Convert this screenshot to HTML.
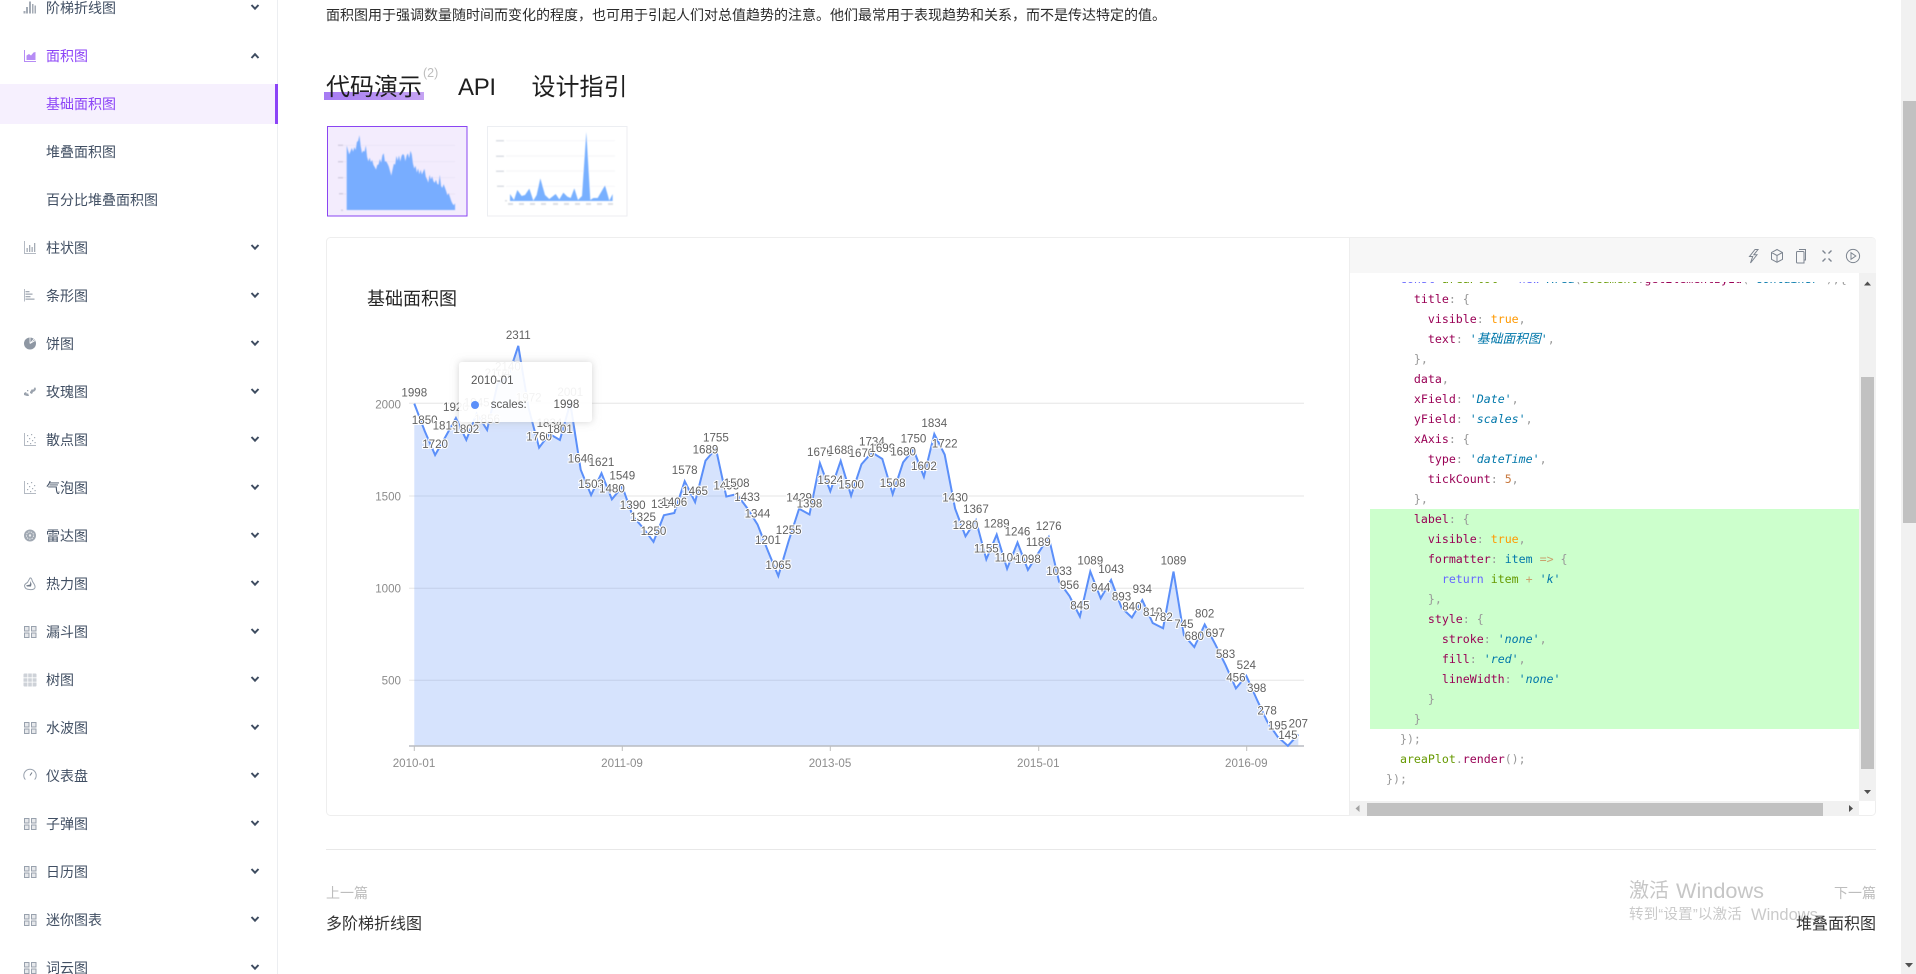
<!DOCTYPE html>
<html lang="zh-CN">
<head>
<meta charset="utf-8">
<title>基础面积图</title>
<style>
html,body{margin:0;padding:0;background:#fff;width:1916px;height:974px;overflow:hidden}
body{position:relative;font-family:"Liberation Sans","Noto Sans CJK SC",sans-serif}
.a{position:absolute;white-space:nowrap}
.r{position:absolute;left:46px;height:40px;line-height:40px;font-size:14px;color:#414f63;white-space:nowrap}
.code{position:absolute;left:1350px;top:282px;width:509px;height:519px;overflow:hidden;background:#fff}
.hl{position:absolute;left:20px;top:227px;width:489px;height:220px;background:#ccffcc}
pre{position:absolute;left:36px;top:-13px;margin:0;font:11.6px/20px "DejaVu Sans Mono","Liberation Mono",monospace;color:#999}
pre b{font-weight:normal;color:#990055}
pre i{font-style:italic;color:#0077aa}
pre i span{font-family:"Liberation Sans","Noto Sans CJK SC",sans-serif;font-size:12.8px}
pre u{text-decoration:none;color:#ff9900}
pre s{text-decoration:none;color:#c8793f}
pre em{font-style:normal;color:#6666ff}
pre q{quotes:none;color:#669900}
pre tt{font:inherit;color:#c9a26d}
pre kbd{font:inherit;color:#0077aa}
svg{position:absolute;left:0;top:0}
svg text{font-family:"Liberation Sans",sans-serif}
.lb text{font-size:11.6px;text-anchor:middle;fill:#616161;stroke:#fff;stroke-width:2px;paint-order:stroke}
.ax text{font-size:11.6px;fill:#8c8c8c}
</style>
</head>
<body>

<!-- sidebar -->
<div class="a" style="left:277px;top:0;width:1px;height:974px;background:#eceef1"></div>
<div class="a" style="left:0;top:84px;width:275px;height:40px;background:#f6f0fe"></div>
<div class="a" style="left:275px;top:84px;width:3px;height:40px;background:#8c44f7"></div>

<div class="r" style="top:-12px">阶梯折线图</div>
<div class="r" style="top:36px;color:#8c44f7">面积图</div>
<div class="r" style="top:84px;color:#8c44f7">基础面积图</div>
<div class="r" style="top:132px">堆叠面积图</div>
<div class="r" style="top:180px">百分比堆叠面积图</div>
<div class="r" style="top:228px">柱状图</div>
<div class="r" style="top:276px">条形图</div>
<div class="r" style="top:324px">饼图</div>
<div class="r" style="top:372px">玫瑰图</div>
<div class="r" style="top:420px">散点图</div>
<div class="r" style="top:468px">气泡图</div>
<div class="r" style="top:516px">雷达图</div>
<div class="r" style="top:564px">热力图</div>
<div class="r" style="top:612px">漏斗图</div>
<div class="r" style="top:660px">树图</div>
<div class="r" style="top:708px">水波图</div>
<div class="r" style="top:756px">仪表盘</div>
<div class="r" style="top:804px">子弹图</div>
<div class="r" style="top:852px">日历图</div>
<div class="r" style="top:900px">迷你图表</div>
<div class="r" style="top:948px">词云图</div>

<svg width="278" height="974" viewBox="0 0 278 974" style="width:278px;height:974px">
<defs>
<path id="dn" d="M251.5-3L255 .7l3.5-3.7" fill="none" stroke="#3e4c60" stroke-width="2"/>
<g id="grid" fill="#e6e8eb" stroke="#98a1ad" stroke-width="1">
<rect x="24.5" y="-5.5" width="4.5" height="4.5"/><rect x="31.5" y="-5.5" width="4.5" height="4.5"/>
<rect x="24.5" y="1" width="4.5" height="4.5"/><rect x="31.5" y="1" width="4.5" height="4.5"/>
</g>
<g id="scat"><path d="M24.5-7V5.5H36" fill="none" stroke="#b4bac3"/>
<g fill="#a4abb5"><rect x="27" y="-5" width="1.2" height="1.2"/><rect x="31" y="-6" width="1.2" height="1.2"/><rect x="34" y="-3" width="1.2" height="1.2"/><rect x="29" y="-2" width="1.2" height="1.2"/><rect x="32" y="0" width="1.2" height="1.2"/><rect x="27" y="1" width="1.2" height="1.2"/><rect x="34.5" y="2" width="1.2" height="1.2"/><rect x="30" y="3" width="1.2" height="1.2"/></g></g>
</defs>
<!-- chevrons -->
<use href="#dn" y="8"/>
<path d="M251.5 58L255 54.2l3.5 3.8" fill="none" stroke="#3e4c60" stroke-width="2"/>
<use href="#dn" y="248"/><use href="#dn" y="296"/><use href="#dn" y="344"/><use href="#dn" y="392"/>
<use href="#dn" y="440"/><use href="#dn" y="488"/><use href="#dn" y="536"/><use href="#dn" y="584"/>
<use href="#dn" y="632"/><use href="#dn" y="680"/><use href="#dn" y="728"/><use href="#dn" y="776"/>
<use href="#dn" y="824"/><use href="#dn" y="872"/><use href="#dn" y="920"/><use href="#dn" y="968"/>
<!-- step -->
<g transform="translate(0,8)" fill="#a4abb5"><rect x="23.5" y="3" width="2" height="2.5"/><rect x="26" y="-1" width="2" height="6.5"/><rect x="29" y="-6.5" width="2" height="12"/><rect x="32" y="-4" width="1.5" height="9.5"/><path d="M34.5-2.5h1.5v8h-1.5z"/></g>
<!-- area -->
<g transform="translate(0,56)"><path d="M24.5-6V5.5H36" fill="none" stroke="#b68cf5"/><path d="M26.5 4V-.5L29-2l2 1.5L33.5-3.5 35.5-4V4z" fill="#b68cf5"/></g>
<!-- bar -->
<g transform="translate(0,248)"><path d="M24.5-7V5.5H36" fill="none" stroke="#b4bac3"/><g fill="#a4abb5"><rect x="26.5" y="0" width="1.3" height="4"/><rect x="29" y="-3" width="1.3" height="7"/><rect x="31.5" y="-1" width="1.3" height="5"/><rect x="34" y="-5" width="1.3" height="9"/></g></g>
<!-- hbar -->
<g transform="translate(0,296)"><path d="M24.5-7V5.5" fill="none" stroke="#b4bac3"/><g fill="#a4abb5"><rect x="25.5" y="-5" width="4" height="1.3"/><rect x="25.5" y="-2.5" width="7" height="1.3"/><rect x="25.5" y="0" width="5" height="1.3"/><rect x="25.5" y="2.5" width="9" height="1.3"/></g></g>
<!-- pie -->
<g transform="translate(0,344)"><circle cx="30" cy="-.5" r="6" fill="#8e97a3"/><path d="M30-.5V-6.5M30-.5L35-3.5M30-.5L34-5" stroke="#fff" stroke-width=".8" fill="none"/></g>
<!-- rose -->
<g transform="translate(0,392)" fill="#9aa2ad"><path d="M24 1l2-1 1 2 1-1 1 3-2 0-3-1zM30 0l2-3 1 1 2-3 1 2-1 2-2 1-1 2-2-1zM27-2l1.3 0 0 1.3-1.3 0z"/></g>
<!-- scatter, bubble -->
<use href="#scat" y="440"/><use href="#scat" y="488"/>
<!-- radar -->
<g transform="translate(0,536)"><circle cx="30" cy="-.5" r="6" fill="#a0a8b2"/><circle cx="30" cy="-.5" r="3.6" fill="none" stroke="#e6e8eb" stroke-width="1" stroke-dasharray="1.5 1"/><circle cx="30" cy="-.5" r="1.2" fill="#eceef0"/></g>
<!-- heat -->
<g transform="translate(0,584)"><path d="M24.5 2c0-2 2-3 3-3.5L30-6c1.5-.5 2 2 2.5 3.5 1 2 3 3.5 2.5 6-.5 2-3 2.3-5.5 2-2.5 0-4.5-1-5-3.5z" fill="#fff" stroke="#98a1ad"/><path d="M26 1.5l4-1 .5-3.5 1 3-.5 2.5h-4z" fill="#6f7987"/></g>
<!-- funnel -->
<use href="#grid" y="632"/>
<!-- tree -->
<g transform="translate(0,680)"><rect x="23.5" y="-6.5" width="13" height="13" rx="1" fill="#ced2d8"/><path d="M23.5-2.2h13M23.5 2.1h13M27.8-6.5V6.5M32.2-6.5V6.5" stroke="#fff" stroke-width=".8"/></g>
<!-- water -->
<use href="#grid" y="728"/>
<!-- gauge -->
<g transform="translate(0,776)" fill="none"><path d="M25.4 3.6A6.2 6.2 0 1 1 34.6 3.6" stroke="#98a1ad"/><path d="M30-.5L32-3.5" stroke="#707a88"/></g>
<use href="#grid" y="824"/><use href="#grid" y="872"/><use href="#grid" y="920"/><use href="#grid" y="968"/>
</svg>

<!-- top text -->
<div class="a" style="left:326px;top:5px;font-size:14px;line-height:20px;color:#2b2b2b">面积图用于强调数量随时间而变化的程度，也可用于引起人们对总值趋势的注意。他们最常用于表现趋势和关系，而不是传达特定的值。</div>

<!-- tabs -->
<div class="a" style="left:324px;top:92px;width:100px;height:8px;background:linear-gradient(90deg,#a67bf3,#c5a3f3)"></div>
<div class="a" style="left:326px;top:70px;font-size:24px;line-height:36px;color:#1e1e1e">代码演示</div>
<div class="a" style="left:423px;top:65px;font-size:12.5px;line-height:16px;color:#bdbdbd">(2)</div>
<div class="a" style="left:458px;top:70px;font-size:24px;line-height:36px;letter-spacing:-.3px;color:#1e1e1e">API</div>
<div class="a" style="left:531.5px;top:70px;font-size:24px;line-height:36px;color:#1e1e1e">设计指引</div>

<!-- thumbnails -->
<svg width="1916" height="974" viewBox="0 0 1916 974" style="width:1916px;height:974px">
<defs><filter id="bl" x="-5%" y="-5%" width="110%" height="110%"><feGaussianBlur stdDeviation=".5"/></filter></defs>
<rect x="327.5" y="126.5" width="139.5" height="89.5" fill="#f3ecfd" stroke="#8a45f2" stroke-width="1"/>
<rect x="487.5" y="126.5" width="139.5" height="89.5" fill="#fff" stroke="#eceef2" stroke-width="1"/>
<g filter="url(#bl)">
<path d="M343 145.3h112M343 161.7h112M343 177.7h112M343 194h112" stroke="#e7e0f4" stroke-width=".7"/>
<g fill="#d4cfe2"><rect x="338" y="144.5" width="5" height="1.5"/><rect x="338" y="161" width="5" height="1.5"/><rect x="338" y="177" width="5" height="1.5"/><rect x="339" y="193" width="4" height="1.5"/><rect x="341" y="209.5" width="2" height="1.5"/></g>
<polygon transform="matrix(1.275 0 0 -.03233 346.7 210)" fill="#78adff" points="0,1998 1,1850 2,1720 3,1819 4,1920 5,1802 6,1945 7,1856 8,2104 9,2140 10,2311 11,1972 12,1760 13,1834 14,1801 15,2001 16,1640 17,1503 18,1621 19,1480 20,1549 21,1390 22,1325 23,1250 24,1394 25,1406 26,1578 27,1465 28,1689 29,1755 30,1495 31,1508 32,1433 33,1344 34,1201 35,1065 36,1255 37,1429 38,1398 39,1676 40,1524 41,1688 42,1500 43,1670 44,1734 45,1699 46,1508 47,1680 48,1750 49,1602 50,1834 51,1722 52,1430 53,1280 54,1367 55,1155 56,1289 57,1104 58,1246 59,1098 60,1189 61,1276 62,1033 63,956 64,845 65,1089 66,944 67,1043 68,893 69,840 70,934 71,810 72,782 73,1089 74,745 75,680 76,802 77,697 78,583 79,456 80,524 81,398 82,278 83,195 84,145 85,207 85,0 0,0"/>
<path d="M506 140.7h109M506 156h109M506 171h109M506 186.3h109" stroke="#f1f2f5" stroke-width=".7"/>
<g fill="#dcdfe4"><rect x="496" y="140" width="8" height="1.5"/><rect x="496" y="155.5" width="8" height="1.5"/><rect x="496" y="170.5" width="8" height="1.5"/><rect x="497" y="185.5" width="7" height="1.5"/><rect x="505" y="200" width="2" height="1.5"/>
<rect x="508" y="203" width="5" height="2"/><rect x="519" y="203" width="5" height="2"/><rect x="530" y="203" width="5" height="2"/><rect x="541" y="203" width="5" height="2"/><rect x="553" y="203" width="5" height="2"/><rect x="564" y="203" width="5" height="2"/><rect x="575" y="203" width="5" height="2"/><rect x="586" y="203" width="5" height="2"/><rect x="597" y="203" width="5" height="2"/><rect x="608" y="203" width="5" height="2"/></g>
<polygon transform="translate(310 110) scale(.33333)" fill="#78b0ff" points="600,273 600,252 612,270 622,240 635,258 645,255 658,236 670,272 680,255 691,205 705,255 718,267 737,252 748,268 760,248 772,260 782,264 793,235 804,270 816,258 829,66 841,270 850,264 863,264 885,226 898,272 908,252 908,273"/>
</g>

<!-- card -->
<rect x="326.5" y="237.5" width="1549" height="578" rx="4" fill="none" stroke="#eeeeee"/>
<path d="M1349.5 238V815" stroke="#eeeeee"/>
<path d="M1350 238h522a4 4 0 0 1 4 4v31h-526z" fill="#f7f7f7"/>

<!-- chart -->
<path d="M409 403.3H1304M409 496H1304M409 588.3H1304M409 680.3H1304" stroke="#e6e6e6" stroke-width="1"/>
<polygon transform="matrix(10.4 0 0 -.18467 414.3 772.63)" fill="#5b8ff9" fill-opacity=".25" points="0,1998 1,1850 2,1720 3,1819 4,1920 5,1802 6,1945 7,1856 8,2104 9,2140 10,2311 11,1972 12,1760 13,1834 14,1801 15,2001 16,1640 17,1503 18,1621 19,1480 20,1549 21,1390 22,1325 23,1250 24,1394 25,1406 26,1578 27,1465 28,1689 29,1755 30,1495 31,1508 32,1433 33,1344 34,1201 35,1065 36,1255 37,1429 38,1398 39,1676 40,1524 41,1688 42,1500 43,1670 44,1734 45,1699 46,1508 47,1680 48,1750 49,1602 50,1834 51,1722 52,1430 53,1280 54,1367 55,1155 56,1289 57,1104 58,1246 59,1098 60,1189 61,1276 62,1033 63,956 64,845 65,1089 66,944 67,1043 68,893 69,840 70,934 71,810 72,782 73,1089 74,745 75,680 76,802 77,697 78,583 79,456 80,524 81,398 82,278 83,195 84,145 85,207 85,145 0,145"/>
<rect x="414.3" y="404" width="12" height="21" fill="#fff"/>
<path d="M409 746H1304" stroke="#b9bcc2" stroke-width="1.5"/>
<path d="M414.3 746v5M622.3 746v5M830.3 746v5M1038.7 746v5M1246.7 746v5" stroke="#bfbfbf"/>
<polyline transform="matrix(10.4 0 0 -.18467 414.3 772.63)" fill="none" stroke="#5b8ff9" stroke-width="2" vector-effect="non-scaling-stroke" points="0,1998 1,1850 2,1720 3,1819 4,1920 5,1802 6,1945 7,1856 8,2104 9,2140 10,2311 11,1972 12,1760 13,1834 14,1801 15,2001 16,1640 17,1503 18,1621 19,1480 20,1549 21,1390 22,1325 23,1250 24,1394 25,1406 26,1578 27,1465 28,1689 29,1755 30,1495 31,1508 32,1433 33,1344 34,1201 35,1065 36,1255 37,1429 38,1398 39,1676 40,1524 41,1688 42,1500 43,1670 44,1734 45,1699 46,1508 47,1680 48,1750 49,1602 50,1834 51,1722 52,1430 53,1280 54,1367 55,1155 56,1289 57,1104 58,1246 59,1098 60,1189 61,1276 62,1033 63,956 64,845 65,1089 66,944 67,1043 68,893 69,840 70,934 71,810 72,782 73,1089 74,745 75,680 76,802 77,697 78,583 79,456 80,524 81,398 82,278 83,195 84,145 85,207"/>
<g class="ax">
<text x="401" y="408.5" text-anchor="end">2000</text>
<text x="401" y="500.5" text-anchor="end">1500</text>
<text x="401" y="592.5" text-anchor="end">1000</text>
<text x="401" y="684.5" text-anchor="end">500</text>
<text x="414" y="767" text-anchor="middle">2010-01</text>
<text x="622" y="767" text-anchor="middle">2011-09</text>
<text x="830" y="767" text-anchor="middle">2013-05</text>
<text x="1038.3" y="767" text-anchor="middle">2015-01</text>
<text x="1246.3" y="767" text-anchor="middle">2016-09</text>
</g>
<g class="lb">
<text x="414.3" y="396.6">1998</text><text x="424.7" y="424">1850</text><text x="435.1" y="448">1720</text><text x="445.5" y="429.7">1819</text><text x="455.9" y="411">1920</text><text x="466.3" y="432.8">1802</text><text x="476.7" y="406.4">1945</text><text x="487.1" y="422.9">1856</text><text x="497.5" y="377.1">2104</text><text x="507.9" y="370.4">2140</text>
<text x="518.3" y="338.8">2311</text><text x="528.7" y="401.4">1972</text><text x="539.1" y="440.6">1760</text><text x="549.5" y="426.9">1834</text><text x="559.9" y="433">1801</text><text x="570.3" y="396.1">2001</text><text x="580.7" y="462.7">1640</text><text x="591.1" y="488">1503</text><text x="601.5" y="466.2">1621</text><text x="611.9" y="492.3">1480</text>
<text x="622.3" y="479.5">1549</text><text x="632.7" y="508.9">1390</text><text x="643.1" y="520.9">1325</text><text x="653.5" y="534.8">1250</text><text x="663.9" y="508.2">1394</text><text x="674.3" y="506">1406</text><text x="684.7" y="474.2">1578</text><text x="695.1" y="495.1">1465</text><text x="705.5" y="453.7">1689</text><text x="715.9" y="441.5">1755</text>
<text x="726.3" y="489.5">1495</text><text x="736.7" y="487.1">1508</text><text x="747.1" y="501">1433</text><text x="757.5" y="517.4">1344</text><text x="767.9" y="543.8">1201</text><text x="778.3" y="568.9">1065</text><text x="788.7" y="533.8">1255</text><text x="799.1" y="501.7">1429</text><text x="809.5" y="507.4">1398</text><text x="819.9" y="456.1">1676</text>
<text x="830.3" y="484.2">1524</text><text x="840.7" y="453.9">1688</text><text x="851.1" y="488.6">1500</text><text x="861.5" y="457.2">1670</text><text x="871.9" y="445.4">1734</text><text x="882.3" y="451.8">1699</text><text x="892.7" y="487.1">1508</text><text x="903.1" y="455.4">1680</text><text x="913.5" y="442.4">1750</text><text x="923.9" y="469.8">1602</text>
<text x="934.3" y="426.9">1834</text><text x="944.7" y="447.6">1722</text><text x="955.1" y="501.5">1430</text><text x="965.5" y="529.2">1280</text><text x="975.9" y="513.2">1367</text><text x="986.3" y="552.3">1155</text><text x="996.7" y="527.6">1289</text><text x="1007.1" y="561.7">1104</text><text x="1017.5" y="535.5">1246</text><text x="1027.9" y="562.8">1098</text>
<text x="1038.3" y="546">1189</text><text x="1048.7" y="530">1276</text><text x="1059.1" y="574.8">1033</text><text x="1069.5" y="589.1">956</text><text x="1079.9" y="609.6">845</text><text x="1090.3" y="564.5">1089</text><text x="1100.7" y="591.3">944</text><text x="1111.1" y="573">1043</text><text x="1121.5" y="600.7">893</text><text x="1131.9" y="610.5">840</text>
<text x="1142.3" y="593.1">934</text><text x="1152.7" y="616">810</text><text x="1163.1" y="621.2">782</text><text x="1173.5" y="564.5">1089</text><text x="1183.9" y="628">745</text><text x="1194.3" y="640">680</text><text x="1204.7" y="617.5">802</text><text x="1215.1" y="636.9">697</text><text x="1225.5" y="657.9">583</text><text x="1235.9" y="681.4">456</text>
<text x="1246.3" y="668.8">524</text><text x="1256.7" y="692.1">398</text><text x="1267.1" y="714.3">278</text><text x="1277.5" y="729.6">195</text><text x="1287.9" y="738.8">145</text><text x="1298.3" y="727.4">207</text>
</g>

<!-- toolbar icons -->
<g fill="none" stroke="#7d8590" stroke-width="1">
<path d="M1755 249.5l-5.5 7h3.2l-2.2 6.5 6.5-8.2h-3.2l4.2-5.3z"/>
<path d="M1777 249.5l5.5 3v6.8l-5.5 3-5.5-3v-6.8zM1771.5 252.5l5.5 3 5.5-3M1777 255.5v6.8"/>
<path d="M1797.5 251.5h5.5a1 1 0 0 1 1 1V263h-6.5a1 1 0 0 1-1-1v-9.5a1 1 0 0 1 1-1zM1799 249.5h6.5v10.5h-1.5"/>
<path d="M1822.5 250.5l3 3M1831.5 250.5l-3 3M1822.5 261.5l3-3M1831.5 261.5l-3-3" stroke-width="1.4"/>
<circle cx="1853" cy="256" r="6.6"/>
<path d="M1851 252.7v6.6l4.8-3.3z"/>
</g>
</svg>

<!-- chart title -->
<div class="a" style="left:367px;top:287px;font-size:18px;line-height:24px;color:#262626">基础面积图</div>

<!-- tooltip -->
<div class="a" style="left:459px;top:362px;width:133px;height:60px;background:rgba(255,255,255,.92);border-radius:3px;box-shadow:0 0 8px rgba(174,174,174,.55);font-size:11.6px;color:#595959">
<div class="a" style="left:12px;top:11px;line-height:16px">2010-01</div>
<div class="a" style="left:12px;top:39px;width:8px;height:8px;border-radius:50%;background:#5b8ff9"></div>
<div class="a" style="left:31.7px;top:35px;line-height:16px">scales:</div>
<div class="a" style="right:12.7px;top:35px;line-height:16px">1998</div>
</div>

<!-- code -->
<div class="code">
<div class="hl"></div>
<pre>  <em>const</em> <q>areaPlot</q> <tt>=</tt> <em>new</em> <kbd>Area</kbd>(<q>document</q>.<b>getElementById</b>(<i>'container'</i>),{
    <b>title</b>: {
      <b>visible</b>: <u>true</u>,
      <b>text</b>: <i>'<span>基础面积图</span>'</i>,
    },
    <b>data</b>,
    <b>xField</b>: <i>'Date'</i>,
    <b>yField</b>: <i>'scales'</i>,
    <b>xAxis</b>: {
      <b>type</b>: <i>'dateTime'</i>,
      <b>tickCount</b>: <s>5</s>,
    },
    <b>label</b>: {
      <b>visible</b>: <u>true</u>,
      <b>formatter</b>: <kbd>item</kbd> <tt>=&gt;</tt> {
        <em>return</em> <q>item</q> <tt>+</tt> <i>'k'</i>
      },
      <b>style</b>: {
        <b>stroke</b>: <i>'none'</i>,
        <b>fill</b>: <i>'red'</i>,
        <b>lineWidth</b>: <i>'none'</i>
      }
    }
  });
  <q>areaPlot</q>.<b>render</b>();
});</pre>
</div>

<!-- page scrollbar -->
<div class="a" style="left:1901px;top:0;width:15px;height:974px;background:#f1f1f1"></div>
<div class="a" style="left:1903px;top:101px;width:13px;height:422px;background:#c1c1c1"></div>

<!-- code scrollbars -->
<div class="a" style="left:1859px;top:273px;width:17px;height:528px;background:#f1f1f1"></div>
<div class="a" style="left:1861px;top:377px;width:13px;height:392px;background:#c1c1c1"></div>
<div class="a" style="left:1350px;top:801px;width:509px;height:15px;background:#f1f1f1"></div>
<div class="a" style="left:1367px;top:803px;width:456px;height:13px;background:#c1c1c1"></div>
<svg width="1916" height="974" viewBox="0 0 1916 974" style="width:1916px;height:974px">
<path d="M1864 285.5h7l-3.5-4z" fill="#505050"/>
<path d="M1864 790h7l-3.5 4z" fill="#505050"/>
<path d="M1359.5 805v7l-4-3.5z" fill="#a3a3a3"/>
<path d="M1849 805v7l4-3.5z" fill="#505050"/>
<path d="M1905 963h8l-4 4.5z" fill="#505050"/>
</svg>

<!-- footer -->
<div class="a" style="left:326px;top:849px;width:1550px;height:1px;background:#e8e8e8"></div>
<div class="a" style="left:326px;top:883px;font-size:14px;line-height:20px;color:#bdbdbd">上一篇</div>
<div class="a" style="left:326px;top:913px;font-size:16px;line-height:24px;color:#333">多阶梯折线图</div>
<div class="a" style="left:1629px;top:877px;font-size:20px;line-height:28px;color:#c6c6c6">激活</div>
<div class="a" style="left:1676px;top:877px;font-size:21.7px;line-height:28px;color:#c6c6c6">Windows</div>
<div class="a" style="left:1629px;top:905px;font-size:14.5px;line-height:20px;letter-spacing:.2px;color:#cacaca">转到“设置”以激活</div>
<div class="a" style="left:1751px;top:905px;font-size:16.5px;line-height:20px;color:#cacaca">Windows</div>
<div class="a" style="right:40px;top:883px;font-size:14px;line-height:20px;color:#bdbdbd">下一篇</div>
<div class="a" style="right:40px;top:913px;font-size:16px;line-height:24px;color:#333">堆叠面积图</div>
</body>
</html>
